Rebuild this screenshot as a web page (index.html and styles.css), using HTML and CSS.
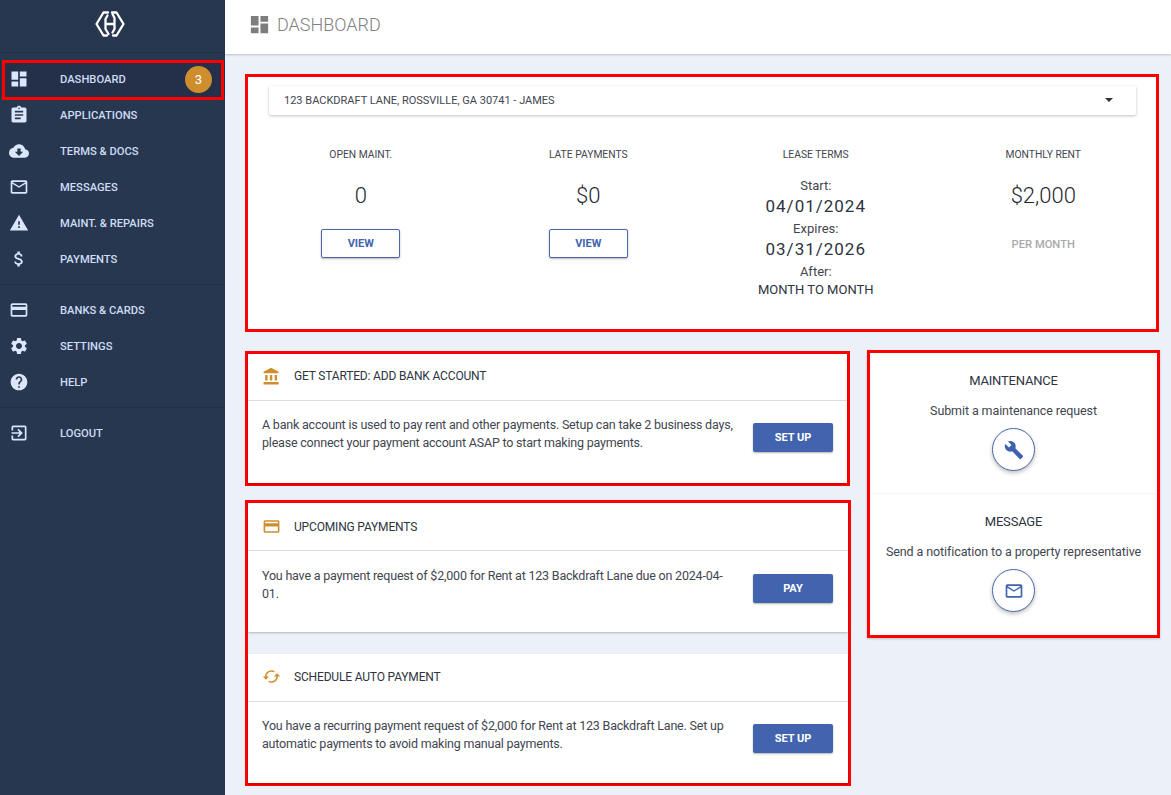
FILE: index.html
```html
<!DOCTYPE html>
<html lang="en">

<head>
    <meta charset="UTF-8">
    <meta name="viewport" content="width=device-width, initial-scale=1.0">
    <title>Dashboard</title>
    <link rel="stylesheet" href="styles.css">
</head>

<body>
    <svg class="sprite" xmlns="http://www.w3.org/2000/svg">
        <symbol id="i-dashboard" viewBox="0 0 24 24"><path d="M3 13h8V3H3v10zm0 8h8v-6H3v6zm10 0h8V11h-8v10zm0-18v6h8V3h-8z"/></symbol>
        <symbol id="i-assignment" viewBox="0 0 24 24"><path d="M19 3h-4.18C14.4 1.84 13.3 1 12 1c-1.3 0-2.4.84-2.82 2H5c-1.1 0-2 .9-2 2v14c0 1.1.9 2 2 2h14c1.1 0 2-.9 2-2V5c0-1.1-.9-2-2-2zm-7 0c.55 0 1 .45 1 1s-.45 1-1 1-1-.45-1-1 .45-1 1-1zm2 14H7v-2h7v2zm3-4H7v-2h10v2zm0-4H7V7h10v2z"/></symbol>
        <symbol id="i-cloud" viewBox="0 0 24 24"><path d="M19.35 10.04C18.67 6.59 15.64 4 12 4 9.11 4 6.6 5.64 5.35 8.04 2.34 8.36 0 10.91 0 14c0 3.31 2.69 6 6 6h13c2.76 0 5-2.24 5-5 0-2.64-2.05-4.78-4.65-4.96zM17 13l-5 5-5-5h3V9h4v4h3z"/></symbol>
        <symbol id="i-mail" viewBox="0 0 24 24"><path d="M20 4H4c-1.1 0-1.99.9-1.99 2L2 18c0 1.1.9 2 2 2h16c1.1 0 2-.9 2-2V6c0-1.1-.9-2-2-2zm0 14H4V8l8 5 8-5v10zm-8-7L4 6h16l-8 5z"/></symbol>
        <symbol id="i-warning" viewBox="0 0 24 24"><path d="M1 21h22L12 2 1 21zm12-3h-2v-2h2v2zm0-4h-2v-4h2v4z"/></symbol>
        <symbol id="i-money" viewBox="0 0 24 24"><path d="M11.8 10.9c-2.27-.59-3-1.2-3-2.15 0-1.09 1.01-1.85 2.7-1.85 1.78 0 2.44.85 2.5 2.1h2.21c-.07-1.72-1.12-3.3-3.21-3.81V3h-3v2.16c-1.94.42-3.5 1.68-3.5 3.61 0 2.31 1.91 3.46 4.7 4.13 2.5.6 3 1.48 3 2.41 0 .69-.49 1.79-2.7 1.79-2.06 0-2.87-.92-2.98-2.1h-2.2c.12 2.19 1.76 3.42 3.68 3.83V21h3v-2.15c1.95-.37 3.5-1.5 3.5-3.55 0-2.84-2.43-3.81-4.7-4.4z"/></symbol>
        <symbol id="i-card" viewBox="0 0 24 24"><path d="M20 4H4c-1.11 0-1.99.89-1.99 2L2 18c0 1.11.89 2 2 2h16c1.11 0 2-.89 2-2V6c0-1.11-.89-2-2-2zm0 14H4v-6h16v6zm0-10H4V6h16v2z"/></symbol>
        <symbol id="i-settings" viewBox="0 0 24 24"><path d="M19.14 12.94c.04-.3.06-.61.06-.94 0-.32-.02-.64-.07-.94l2.03-1.58c.18-.14.23-.41.12-.61l-1.92-3.32c-.12-.22-.37-.29-.59-.22l-2.39.96c-.5-.38-1.03-.7-1.62-.94l-.36-2.54c-.04-.24-.24-.41-.48-.41h-3.84c-.24 0-.43.17-.47.41l-.36 2.54c-.59.24-1.13.57-1.62.94l-2.39-.96c-.22-.08-.47 0-.59.22L2.74 8.87c-.12.21-.08.47.12.61l2.03 1.58c-.05.3-.09.63-.09.94s.02.64.07.94l-2.03 1.58c-.18.14-.23.41-.12.61l1.92 3.32c.12.22.37.29.59.22l2.39-.96c.5.38 1.03.7 1.62.94l.36 2.54c.05.24.24.41.48.41h3.84c.24 0 .44-.17.47-.41l.36-2.54c.59-.24 1.13-.56 1.62-.94l2.39.96c.22.08.47 0 .59-.22l1.92-3.32c.12-.22.07-.47-.12-.61l-2.01-1.58zM12 15.6c-1.98 0-3.6-1.62-3.6-3.6s1.62-3.6 3.6-3.6 3.6 1.62 3.6 3.6-1.62 3.6-3.6 3.6z"/></symbol>
        <symbol id="i-help" viewBox="0 0 24 24"><path d="M12 2C6.48 2 2 6.48 2 12s4.48 10 10 10 10-4.48 10-10S17.52 2 12 2zm1 17h-2v-2h2v2zm2.07-7.75l-.9.92C13.45 12.9 13 13.5 13 15h-2v-.5c0-1.1.45-2.1 1.17-2.83l1.24-1.26c.37-.36.59-.86.59-1.41 0-1.1-.9-2-2-2s-2 .9-2 2H8c0-2.21 1.79-4 4-4s4 1.79 4 4c0 .88-.36 1.68-.93 2.25z"/></symbol>
        <symbol id="i-exit" viewBox="0 0 24 24"><path d="M10.09 15.59L11.5 17l5-5-5-5-1.41 1.41L12.67 11H3v2h9.67l-2.58 2.59zM19 3H5c-1.11 0-2 .9-2 2v4h2V5h14v14H5v-4H3v4c0 1.1.89 2 2 2h14c1.1 0 2-.9 2-2V5c0-1.1-.9-2-2-2z"/></symbol>
        <symbol id="i-bank" viewBox="0 0 24 24"><path d="M4 10v7h3v-7H4zm6 0v7h3v-7h-3zM2 22h19v-3H2v3zm14-12v7h3v-7h-3zm-4.5-9L2 6v2h19V6l-9.5-5z"/></symbol>
        <symbol id="i-sync" viewBox="0 0 24 24"><path d="M12 4V1L8 5l4 4V6c3.31 0 6 2.69 6 6 0 1.01-.25 1.97-.7 2.8l1.46 1.46C19.54 15.03 20 13.57 20 12c0-4.42-3.58-8-8-8zm0 14c-3.31 0-6-2.69-6-6 0-1.01.25-1.97.7-2.8L5.24 7.74C4.46 8.97 4 10.43 4 12c0 4.42 3.58 8 8 8v3l4-4-4-4v3z"/></symbol>
        <symbol id="i-build" viewBox="0 0 24 24"><path d="M22.7 19l-9.1-9.1c.9-2.3.4-5-1.5-6.9-2-2-5-2.4-7.4-1.3L9 6 6 9 1.6 4.7C.4 7.1.9 10.1 2.9 12.1c1.9 1.9 4.6 2.4 6.9 1.5l9.1 9.1c.4.4 1 .4 1.4 0l2.3-2.3c.5-.4.5-1.1.1-1.4z"/></symbol>
    </svg>

    <aside class="sidebar">
        <div class="logo">
            <svg class="logo-mark" viewBox="0 0 30 26" fill="none" stroke="#fff" stroke-width="2.3" stroke-linejoin="round" stroke-linecap="round">
                <path d="M13 1.500H8.500L1.500 13l7 11.500H12"/>
                <path d="M17 1.500h4.500l7 11.500-7 11.500H18"/>
                <path d="M12.500 4.500L10.500 8v10l3 5M17.500 3l2 4v11l-2 3.500M10.500 13h9"/>
            </svg>
        </div>
        <nav class="nav-group">
            <a class="nav-item active"><svg class="nav-icon"><use href="#i-dashboard"/></svg>DASHBOARD<span class="badge">3</span></a>
            <a class="nav-item"><svg class="nav-icon"><use href="#i-assignment"/></svg>APPLICATIONS</a>
            <a class="nav-item"><svg class="nav-icon"><use href="#i-cloud"/></svg>TERMS &amp; DOCS</a>
            <a class="nav-item"><svg class="nav-icon"><use href="#i-mail"/></svg>MESSAGES</a>
            <a class="nav-item"><svg class="nav-icon"><use href="#i-warning"/></svg>MAINT. &amp; REPAIRS</a>
            <a class="nav-item"><svg class="nav-icon"><use href="#i-money"/></svg>PAYMENTS</a>
        </nav>
        <nav class="nav-group">
            <a class="nav-item"><svg class="nav-icon"><use href="#i-card"/></svg>BANKS &amp; CARDS</a>
            <a class="nav-item"><svg class="nav-icon"><use href="#i-settings"/></svg>SETTINGS</a>
            <a class="nav-item"><svg class="nav-icon"><use href="#i-help"/></svg>HELP</a>
        </nav>
        <nav class="nav-group">
            <a class="nav-item"><svg class="nav-icon"><use href="#i-exit"/></svg>LOGOUT</a>
        </nav>
    </aside>

    <div class="main">
        <header class="topbar">
            <svg class="topbar-icon"><use href="#i-dashboard"/></svg>
            <h1>DASHBOARD</h1>
        </header>

        <div class="content">
            <section class="panel marked summary">
                <div class="property-select">
                    <span>123 BACKDRAFT LANE, ROSSVILLE, GA 30741 - JAMES</span>
                    <i class="caret"></i>
                </div>
                <div class="stats">
                    <div class="stat">
                        <h3>OPEN MAINT.</h3>
                        <div class="stat-value">0</div>
                        <button class="btn-outline">VIEW</button>
                    </div>
                    <div class="stat">
                        <h3>LATE PAYMENTS</h3>
                        <div class="stat-value">$0</div>
                        <button class="btn-outline">VIEW</button>
                    </div>
                    <div class="stat">
                        <h3>LEASE TERMS</h3>
                        <div class="lease">
                            <span>Start:</span>
                            <strong>04/01/2024</strong>
                            <span>Expires:</span>
                            <strong>03/31/2026</strong>
                            <span>After:</span>
                            <span class="lease-after">MONTH TO MONTH</span>
                        </div>
                    </div>
                    <div class="stat">
                        <h3>MONTHLY RENT</h3>
                        <div class="stat-value">$2,000</div>
                        <div class="per-month">PER MONTH</div>
                    </div>
                </div>
            </section>

            <div class="columns">
                <div class="col-left">
                    <section class="marked single">
                        <div class="panel task">
                            <div class="task-head"><svg class="task-icon"><use href="#i-bank"/></svg>GET STARTED: ADD BANK ACCOUNT</div>
                            <div class="task-body">
                                <p>A bank account is used to pay rent and other payments. Setup can take 2 business days, please connect your payment account ASAP to start making payments.</p>
                                <button class="btn-solid">SET UP</button>
                            </div>
                        </div>
                    </section>
                    <section class="marked stack">
                        <div class="panel task">
                            <div class="task-head"><svg class="task-icon"><use href="#i-card"/></svg>UPCOMING PAYMENTS</div>
                            <div class="task-body">
                                <p>You have a payment request of $2,000 for Rent at 123 Backdraft Lane due on 2024-04-01.</p>
                                <button class="btn-solid">PAY</button>
                            </div>
                        </div>
                        <div class="panel task">
                            <div class="task-head"><svg class="task-icon sync"><use href="#i-sync"/></svg>SCHEDULE AUTO PAYMENT</div>
                            <div class="task-body">
                                <p>You have a recurring payment request of $2,000 for Rent at 123 Backdraft Lane. Set up automatic payments to avoid making manual payments.</p>
                                <button class="btn-solid">SET UP</button>
                            </div>
                        </div>
                    </section>
                </div>

                <section class="panel marked actions">
                    <div class="action">
                        <h2>MAINTENANCE</h2>
                        <p>Submit a maintenance request</p>
                        <button class="btn-round"><svg><use href="#i-build"/></svg></button>
                    </div>
                    <div class="action">
                        <h2>MESSAGE</h2>
                        <p>Send a notification to a property representative</p>
                        <button class="btn-round"><svg><use href="#i-mail"/></svg></button>
                    </div>
                </section>
            </div>
        </div>
    </div>
</body>

</html>
```

FILE: styles.css
```css
* {
    box-sizing: border-box;
}

body {
    margin: 0;
    height: 795px;
    overflow: hidden;
    display: flex;
    background-color: #ecf0f8;
    font-family: "Roboto", "Noto Sans", sans-serif;
    font-size: 13px;
    color: #3f4650;
}

.sprite {
    display: none;
}

h1,
h2,
h3,
p {
    margin: 0;
    font-weight: 400;
}

button {
    font-family: inherit;
    cursor: pointer;
}

/* sidebar */
.sidebar {
    width: 225px;
    flex: none;
    background-color: #27374f;
    color: #cfdcf5;
}

.logo {
    height: 53px;
    display: flex;
    align-items: center;
    justify-content: center;
    padding: 0 5px 5px 0;
    border-bottom: 1px solid #222f45;
}

.logo-mark {
    width: 30px;
    height: 26px;
}

.nav-group {
    padding: 7px 0;
    border-bottom: 1px solid #222f45;
}

.logo + .nav-group {
    padding-top: 8px;
}

.nav-group:last-child {
    border-bottom: none;
}

.nav-item {
    position: relative;
    display: flex;
    align-items: center;
    height: 36px;
    padding-left: 9px;
    font-size: 11.2px;
    font-weight: 500;
}

.nav-item.active {
    background-color: #242f49;
}

/* red annotation frame */
.nav-item.active::after {
    content: "";
    position: absolute;
    top: -1px;
    bottom: -3px;
    left: 2px;
    right: 1px;
    border: 3px solid #f00;
}

.nav-icon {
    width: 20px;
    height: 20px;
    margin-right: 31px;
    fill: #dbe6fa;
}

.badge {
    position: absolute;
    right: 13px;
    top: 5px;
    width: 27px;
    height: 27px;
    border-radius: 50%;
    background-color: #cf8e2e;
    color: #fff;
    font-size: 13px;
    font-weight: 400;
    display: flex;
    align-items: center;
    justify-content: center;
}

/* main */
.main {
    flex: 1;
    min-width: 0;
}

.topbar {
    height: 54px;
    display: flex;
    align-items: center;
    padding: 0 0 6px 23px;
    background-color: #fff;
    box-shadow: 0 1px 2px rgba(0, 0, 0, 0.2);
}

.topbar-icon {
    width: 23px;
    height: 23px;
    margin-right: 6px;
    fill: #7d7d7d;
}

.topbar h1 {
    font-size: 18px;
    font-weight: 300;
    color: #808080;
}

.content {
    padding: 20px 11px 0 20px;
}

.panel {
    background-color: #fff;
}

.marked {
    border: 3px solid #f00;
}

.summary {
    height: 258px;
    margin-right: 1px;
    padding: 9px 20px 0 21px;
}

.property-select {
    height: 29px;
    display: flex;
    align-items: center;
    justify-content: space-between;
    padding: 0 23px 1px 15px;
    font-size: 11px;
    border-radius: 2px;
    box-shadow: 0 1px 3px rgba(0, 0, 0, 0.25);
}

.caret {
    border-left: 4px solid transparent;
    border-right: 4px solid transparent;
    border-top: 4px solid #333;
}

.stats {
    display: grid;
    grid-template-columns: repeat(4, 1fr);
    margin: 0 -21px 0 -22px;
    padding-top: 33px;
}

.stat {
    text-align: center;
}

.stat h3 {
    font-size: 10.3px;
    line-height: 14px;
}

.stat-value {
    margin-top: 21px;
    font-size: 22px;
    font-weight: 300;
    line-height: 26px;
    color: #1f2630;
}

.btn-outline {
    display: block;
    width: 79px;
    height: 29px;
    margin: 20px auto 0;
    padding: 0;
    background-color: #fff;
    border: 1px solid #4a66a8;
    border-radius: 2px;
    color: #4264ae;
    font-size: 11px;
    font-weight: 700;
    box-shadow: 0 1px 2px rgba(0, 0, 0, 0.3);
}

.lease {
    display: flex;
    flex-direction: column;
    margin-top: 13px;
    font-size: 13px;
    line-height: 21.5px;
}

.lease strong {
    margin: -1px 0 1px;
    font-size: 17px;
    font-weight: 400;
    letter-spacing: 1px;
    color: #2d3440;
}

.lease-after {
    margin-top: -4px;
    color: #2d3440;
}

.per-month {
    margin-top: 29px;
    font-size: 11.2px;
    font-weight: 500;
    color: #aaaaaa;
}

.columns {
    display: grid;
    grid-template-columns: 606px 293px;
    gap: 16px;
    margin-top: 19px;
    align-items: start;
}

.col-left {
    display: flex;
    flex-direction: column;
    gap: 14px;
}

.single {
    margin-right: 1px;
}

.single .task-body {
    padding-right: 14px;
}

.task {
    box-shadow: 0 1px 2px rgba(0, 0, 0, 0.25);
}

.stack {
    height: 286px;
    display: flex;
    flex-direction: column;
    gap: 22px;
}

.task-head {
    height: 47px;
    display: flex;
    align-items: center;
    padding: 0 0 2px 14px;
    font-size: 12px;
    letter-spacing: -0.17px;
    color: #2d3440;
    border-bottom: 1px solid #dddddd;
}

.stack .task-head {
    height: 48px;
}

.stack .task:first-child .task-head {
    padding-bottom: 0;
}

.task-icon {
    width: 19px;
    height: 19px;
    margin-right: 13px;
    fill: #cf8e2e;
}

.sync {
    transform: rotate(90deg);
}

.task-body {
    display: flex;
    justify-content: space-between;
    height: 82px;
    padding: 15px 15px 0 14px;
}

.stack .task-body {
    height: 81px;
}

.stack .task:first-child .task-body {
    padding-top: 16px;
}

.task-body p {
    width: 475px;
    line-height: 18px;
    font-size: 12.5px;
    letter-spacing: -0.2px;
}

.btn-solid {
    flex: none;
    width: 80px;
    height: 29px;
    margin-top: 7px;
    padding: 0;
    background-color: #4264ae;
    border: none;
    border-radius: 2px;
    color: #fff;
    font-size: 11px;
    font-weight: 700;
    box-shadow: 0 1px 2px rgba(0, 0, 0, 0.3);
}

.actions {
    height: 288px;
    margin-top: -1px;
    box-shadow: 0 1px 2px rgba(0, 0, 0, 0.2);
}

.action {
    height: 141px;
    padding-top: 19px;
    text-align: center;
    border-bottom: 1px solid #f6f6f6;
}

.action:last-child {
    border-bottom: none;
}

.action h2 {
    font-size: 13px;
    letter-spacing: -0.2px;
    line-height: 18px;
    color: #2d3440;
}

.action p {
    margin-top: 12px;
    font-size: 12.5px;
    letter-spacing: -0.1px;
    line-height: 18px;
}

.btn-round {
    width: 43px;
    height: 43px;
    margin: 8px auto 0;
    padding: 0;
    border: 1px solid #4a66a8;
    border-radius: 50%;
    background-color: #fff;
    box-shadow: 0 2px 4px rgba(0, 0, 0, 0.25);
    display: flex;
    align-items: center;
    justify-content: center;
}

.btn-round svg {
    width: 20px;
    height: 20px;
    fill: #3f62b0;
}
```
